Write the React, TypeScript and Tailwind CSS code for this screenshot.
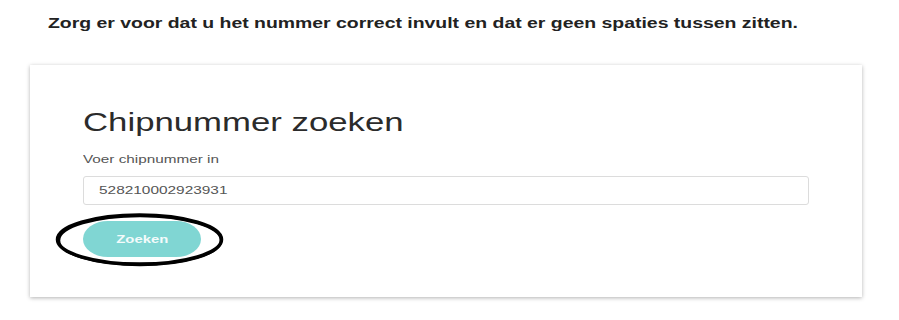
import React from "react";

export default function App() {
  return (
    <div className="min-h-[320px] w-[899px] bg-white font-['Liberation_Sans',Arial,sans-serif]">
      <div className="pl-[48px] pt-[13px] leading-5 whitespace-nowrap">
        <span className="inline-block origin-left scale-x-[1.387] text-[14px] font-bold text-[#222]">
          Zorg er voor dat u het nummer correct invult en dat er geen spaties tussen zitten.
        </span>
      </div>

      <div className="ml-[30px] mt-[32px] w-[832px] bg-white px-[53px] pt-[42px] pb-[40px] shadow-[0_1px_4px_rgba(0,0,0,0.3)]">
        <h2 className="text-[25px] leading-[30px] text-[#2b2b2b] whitespace-nowrap">
          <span className="inline-block origin-left scale-x-[1.39]">Chipnummer zoeken</span>
        </h2>
        <div className="mt-[15px] text-[11px] leading-[15px] text-[#555] whitespace-nowrap">
          <span className="inline-block origin-left scale-x-[1.39]">Voer chipnummer in</span>
        </div>
        <div className="mt-[9px] flex h-[29px] w-full items-center rounded-[3px] border border-[#dcdcdc] px-[15px] text-[11px] text-[#555]">
          <span className="inline-block origin-left scale-x-[1.4]">528210002923931</span>
        </div>
        <div className="mt-[16px] flex">
          <div className="relative">
            <button className="flex h-[36px] w-[118px] items-center justify-center rounded-[25px/18px] bg-[#80d6d3] text-[11px] font-bold text-[#f4fbfb]">
              <span className="inline-block scale-x-[1.35]">Zoeken</span>
            </button>
            <svg
              className="pointer-events-none absolute left-[-29px] top-[-9px]"
              width="171"
              height="56"
              viewBox="0 0 171 56"
            >
              <ellipse cx="85.5" cy="27.5" rx="82" ry="24.5" fill="none" stroke="#000" strokeWidth="3.5" />
              <ellipse cx="86" cy="28.5" rx="81" ry="24.5" fill="none" stroke="#000" strokeWidth="2.5" />
            </svg>
          </div>
        </div>
      </div>
    </div>
  );
}
